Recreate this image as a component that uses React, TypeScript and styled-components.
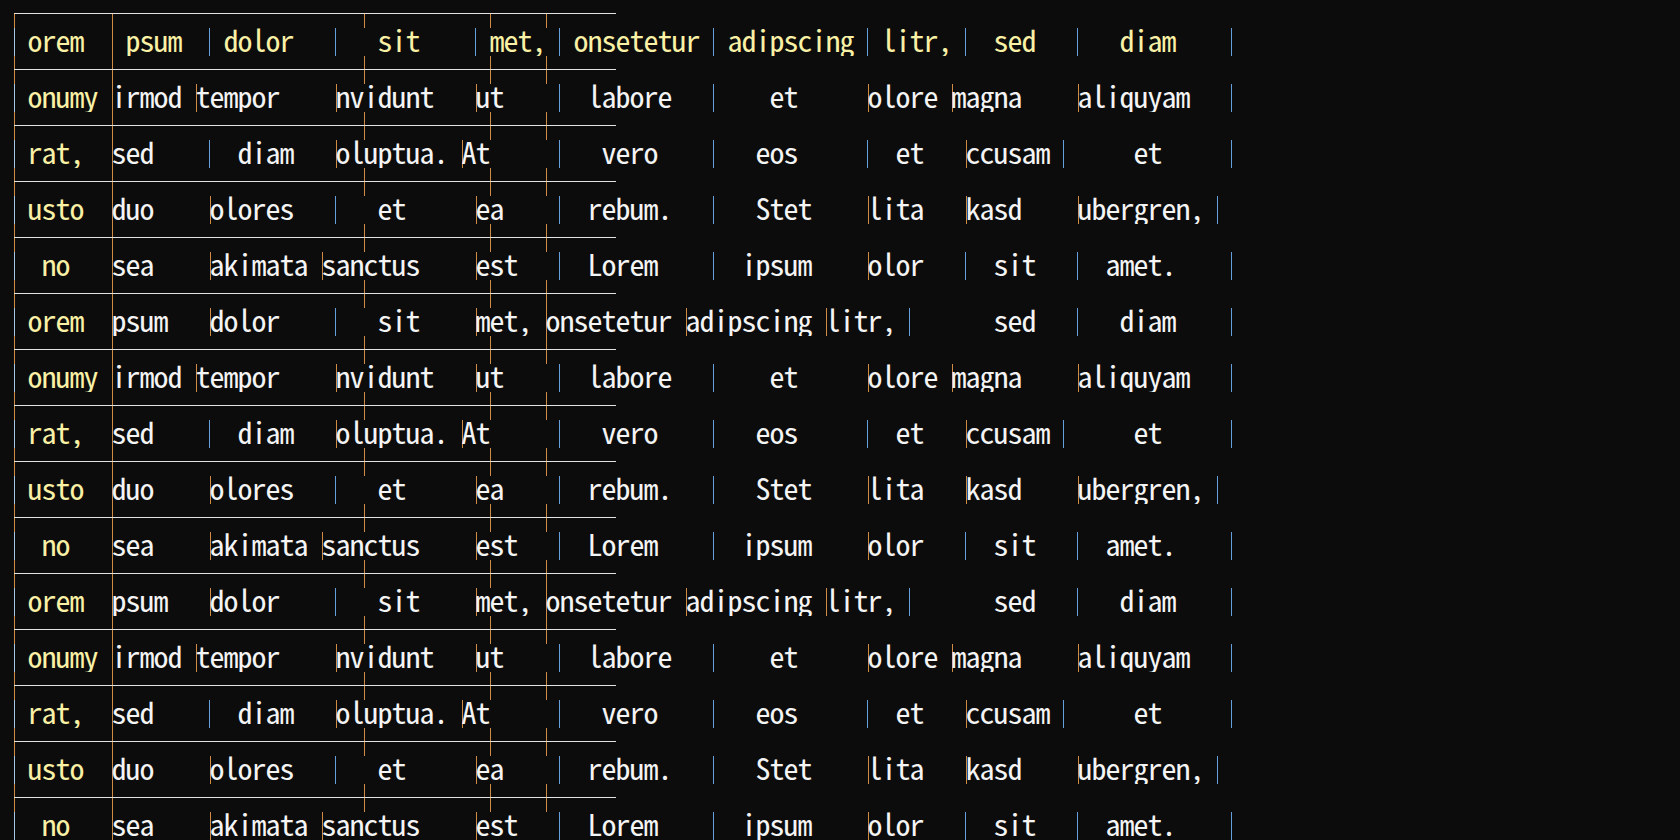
import React from 'react';
import styled, { createGlobalStyle } from 'styled-components';

const COLS = 120;
const CELL_W = 14;
const LINE_H = 28;

const YELLOW = '#f9f1a5';
const WHITE = '#f4f4f4';
const ORANGE = '#d08c42';
const BLUE = '#64a0dc';
const EDGE = '#a8c8e8';
const RULE = '#e2e2e2';

const GlobalStyle = createGlobalStyle`
  html, body {
    margin: 0;
    padding: 0;
    background: #0c0c0c;
  }
`;

const Screen = styled.div`
  width: 1680px;
  height: 840px;
  overflow: hidden;
  background: #0c0c0c;
  display: flex;
  flex-direction: column;
  font-family: "Noto Sans Mono CJK JP", "Liberation Mono", monospace;
`;

const Line = styled.div`
  flex: none;
  height: ${LINE_H}px;
  overflow: hidden;
  display: grid;
  grid-template-columns: repeat(${COLS}, ${CELL_W}px);
`;

type CellProps = {
  $fg?: string;
  $left?: string;
  $right?: string;
  $strike?: boolean;
  $cut?: boolean;
};

// grid lines are painted as background layers of the cell
const layers = (p: CellProps) => {
  const top = p.$cut ? 13 : 0;
  const out: string[] = [];
  if (p.$strike) out.push(`linear-gradient(${RULE}, ${RULE}) 0 13px / 100% 1px no-repeat`);
  if (p.$left) out.push(`linear-gradient(${p.$left}, ${p.$left}) 0 ${top}px / 1px ${LINE_H - top}px no-repeat`);
  if (p.$right) out.push(`linear-gradient(${p.$right}, ${p.$right}) 100% ${top}px / 1px ${LINE_H - top}px no-repeat`);
  return out.length ? out.join(', ') : 'none';
};

const Cell = styled.span<CellProps>`
  height: ${LINE_H}px;
  display: flex;
  justify-content: center;
  font-size: 30px;
  line-height: 22px;
  white-space: pre;
  color: ${(p) => p.$fg ?? WHITE};
  background: ${(p) => layers(p)};
`;

type Word = [number, string];
type TextRow = { words: Word[]; left: number[]; right: number[]; allYellow?: boolean };

const R1: TextRow = {
  words: [[2, 'orem'], [9, 'psum'], [16, 'dolor'], [27, 'sit'], [35, 'met,'], [41, 'onsetetur'], [52, 'adipscing'], [63, 'litr,'], [71, 'sed'], [80, 'diam']],
  left: [1, 8],
  right: [14, 23, 33, 39, 50, 61, 68, 76, 87],
  allYellow: true,
};

const R2: TextRow = {
  words: [[2, 'onumy'], [8, 'irmod'], [14, 'tempor'], [24, 'nvidunt'], [34, 'ut'], [42, 'labore'], [55, 'et'], [62, 'olore'], [68, 'magna'], [77, 'aliquyam']],
  left: [1, 8, 14, 24, 34, 62, 68, 77],
  right: [39, 50, 87],
};

const R3: TextRow = {
  words: [[2, 'rat,'], [8, 'sed'], [17, 'diam'], [24, 'oluptua.'], [33, 'At'], [43, 'vero'], [54, 'eos'], [64, 'et'], [69, 'ccusam'], [81, 'et']],
  left: [1, 8, 24, 33, 69],
  right: [14, 39, 50, 61, 75, 87],
};

const R4: TextRow = {
  words: [[2, 'usto'], [8, 'duo'], [15, 'olores'], [27, 'et'], [34, 'ea'], [42, 'rebum.'], [54, 'Stet'], [62, 'lita'], [69, 'kasd'], [77, 'ubergren,']],
  left: [1, 8, 15, 34, 62, 69, 77],
  right: [23, 39, 50, 86],
};

const R5: TextRow = {
  words: [[3, 'no'], [8, 'sea'], [15, 'akimata'], [23, 'sanctus'], [34, 'est'], [42, 'Lorem'], [53, 'ipsum'], [62, 'olor'], [71, 'sit'], [79, 'amet.']],
  left: [1, 8, 15, 23, 34, 62],
  right: [39, 50, 68, 76, 87],
};

const R6: TextRow = {
  words: [[2, 'orem'], [8, 'psum'], [15, 'dolor'], [27, 'sit'], [34, 'met,'], [39, 'onsetetur'], [49, 'adipscing'], [59, 'litr,'], [71, 'sed'], [80, 'diam']],
  left: [1, 8, 15, 34, 39, 49, 59],
  right: [23, 64, 76, 87],
};

const ROWS = [R1, R2, R3, R4, R5, R6, R2, R3, R4, R5, R6, R2, R3, R4, R5];

const SEP_LEFT = [1, 8, 26, 35, 39];
const SEP_FROM = 1;
const SEP_TO = 43;

const range = (n: number) => Array.from({ length: n }, (_, i) => i);

function SeparatorLine({ cut }: { cut?: boolean }) {
  return (
    <Line>
      {range(COLS).map((c) => (
        <Cell
          key={c}
          $cut={cut}
          $strike={c >= SEP_FROM && c <= SEP_TO}
          $left={SEP_LEFT.includes(c) ? ORANGE : undefined}
        />
      ))}
    </Line>
  );
}

function TextLine({ row }: { row: TextRow }) {
  const chars: Record<number, { ch: string; yellow: boolean }> = {};
  row.words.forEach(([col, text], i) => {
    const yellow = row.allYellow || i === 0;
    text.split('').forEach((ch, k) => {
      chars[col + k] = { ch, yellow };
    });
  });
  return (
    <Line>
      {range(COLS).map((c) => {
        const cell = chars[c];
        return (
          <Cell
            key={c}
            $fg={cell?.yellow ? YELLOW : WHITE}
            $left={row.left.includes(c) ? (c === 1 ? EDGE : ORANGE) : undefined}
            $right={row.right.includes(c) ? BLUE : undefined}
          >
            {cell ? cell.ch : ''}
          </Cell>
        );
      })}
    </Line>
  );
}

export default function App() {
  return (
    <>
      <GlobalStyle />
      <Screen>
        <SeparatorLine cut />
        {ROWS.map((row, i) => (
          <React.Fragment key={i}>
            <TextLine row={row} />
            {i < ROWS.length - 1 && <SeparatorLine />}
          </React.Fragment>
        ))}
      </Screen>
    </>
  );
}
